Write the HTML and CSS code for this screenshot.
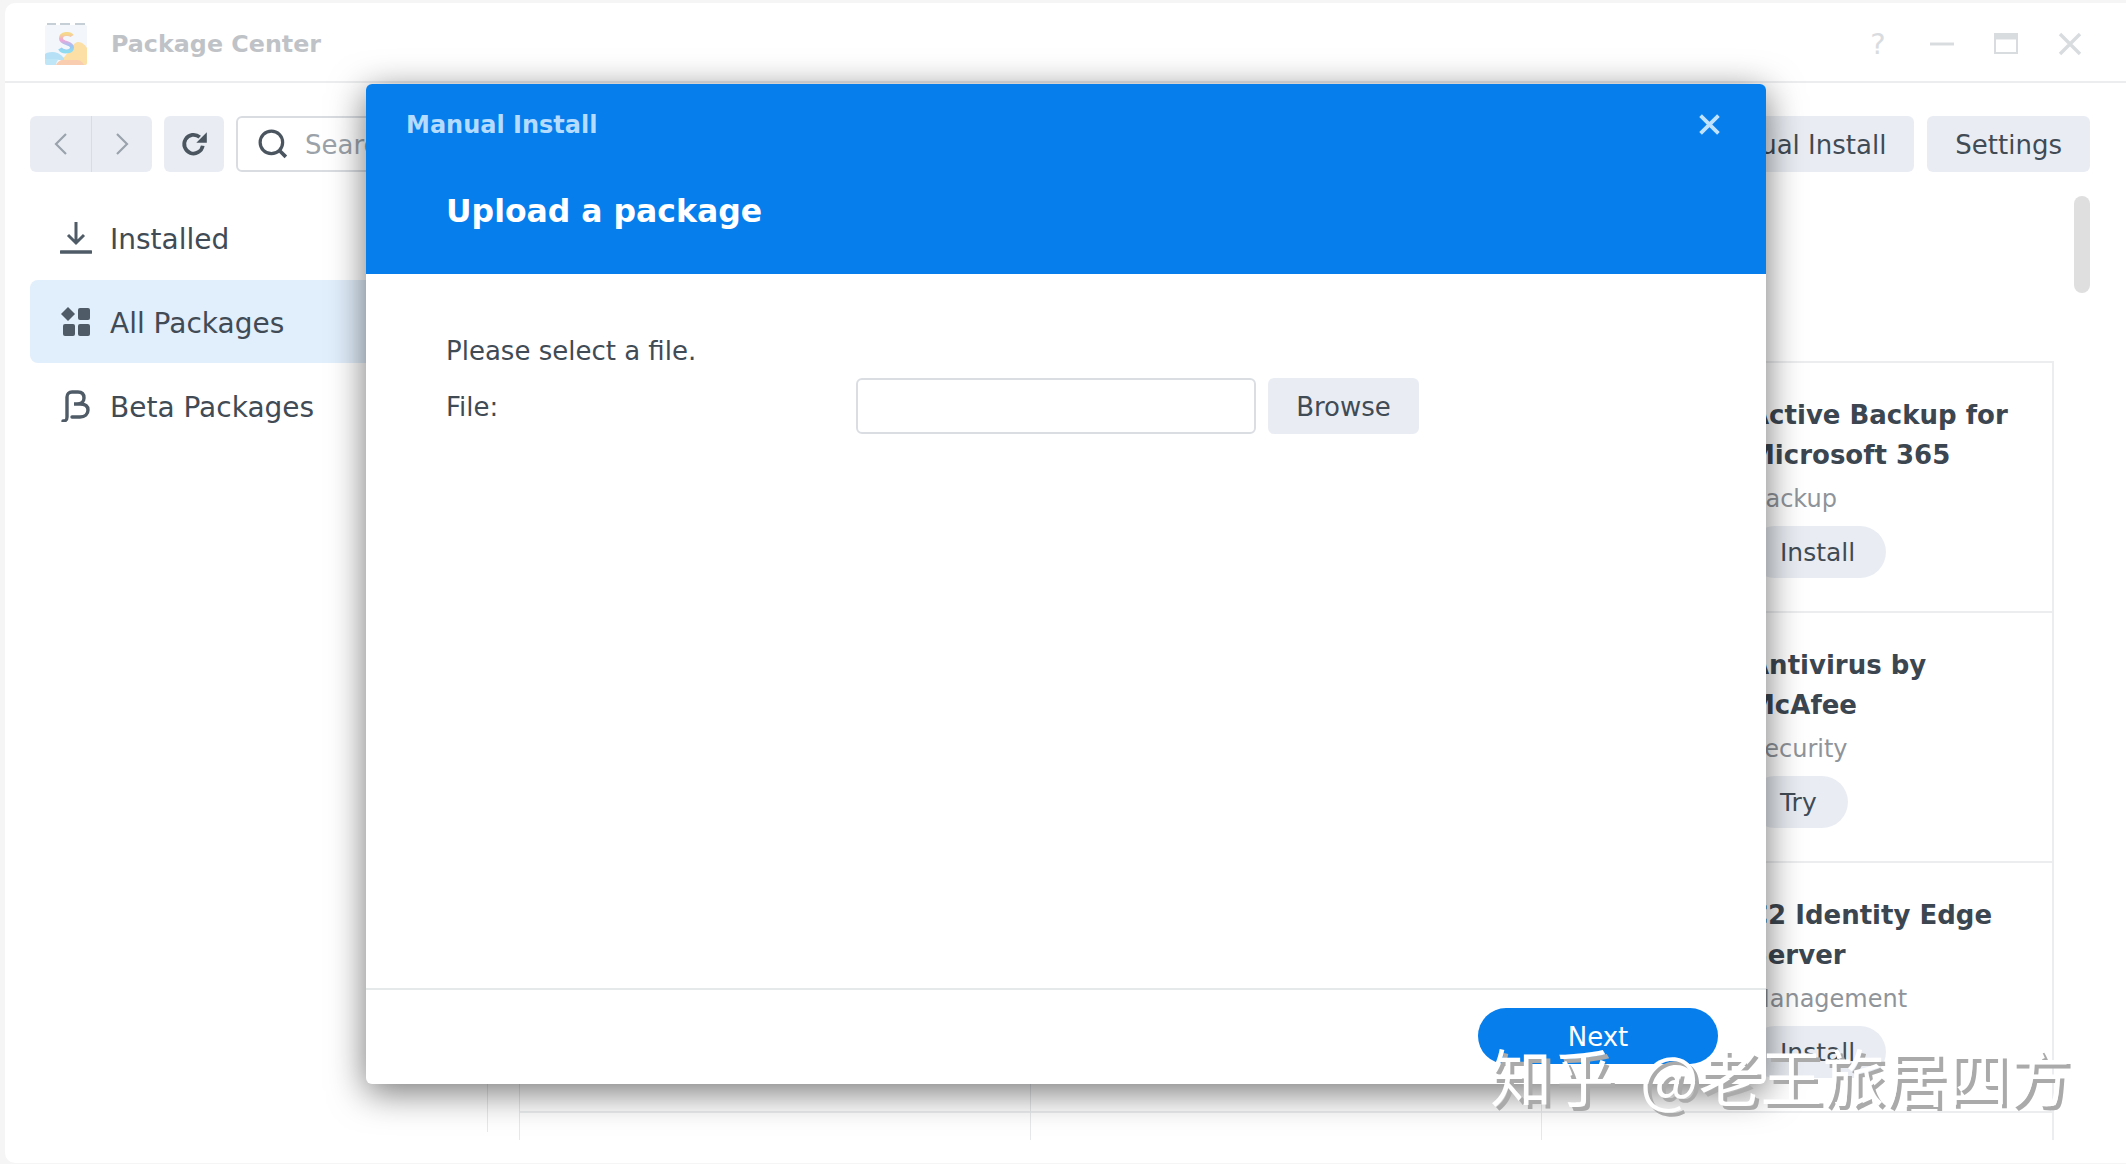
FILE: index.html
```html
<!DOCTYPE html>
<html lang="en">
<head>
  <meta charset="UTF-8" />
  <title>Package Center</title>
  <link rel="stylesheet" href="styles.css">
</head>
<body>
  <div class="window">
    <header class="titlebar">
      <svg class="app-logo" viewBox="0 0 42 42">
        <defs>
          <linearGradient id="sGrad" x1="0" y1="0" x2="0" y2="1">
            <stop offset="0" stop-color="#f6d98a"/>
            <stop offset="0.35" stop-color="#f0a6d8"/>
            <stop offset="0.7" stop-color="#9cc4f5"/>
            <stop offset="1" stop-color="#8fdcf0"/>
          </linearGradient>
        </defs>
        <rect x="0" y="2" width="42" height="40" rx="2" fill="#f3f6fa"/>
        <path d="M2 1h9M15 1h10M30 1h10" stroke="#c6ced6" stroke-width="2"/>
        <path d="M16 36c6-1 10-16 17-17 4 0 7 3 9 6v15a2 2 0 0 1-2 2H16z" fill="#fbdfa4"/>
        <path d="M0 31c5-3 13-3 19 4v2H0z" fill="#b5e0f6"/>
        <path d="M0 36h14c-2 2-3 4-3 6H2a2 2 0 0 1-2-2z" fill="#bfe6f7"/>
        <path d="M11 42c1-3 4-5 7-5h14c3 0 6 2 7 5z" fill="#f9cdb0"/>
        <path d="M27 13c-2-3-11-3-11 2.500s11 3.500 11 9c0 5-10 5-12 1" fill="none" stroke="url(#sGrad)" stroke-width="4"/>
      </svg>
      <span class="app-name">Package Center</span>
      <div class="win-controls">
        <span class="win-help">?</span>
        <svg viewBox="0 0 24 24"><path d="M0 12h24" stroke="#d9dcdf" stroke-width="3"/></svg>
        <svg viewBox="0 0 24 24"><rect x="1" y="2" width="22" height="19" fill="none" stroke="#d9dcdf" stroke-width="2"/><path d="M1 5h22" stroke="#d9dcdf" stroke-width="5"/></svg>
        <svg viewBox="0 0 24 24"><path d="M2 2l20 20M22 2L2 22" stroke="#d9dcdf" stroke-width="3.400"/></svg>
      </div>
    </header>

    <div class="toolbar">
      <div class="nav-group">
        <button class="tool-btn nav-btn"><svg viewBox="0 0 16 24"><path d="M13 2L3 12l10 10" fill="none" stroke="#9aa3ad" stroke-width="2.200"/></svg></button>
        <button class="tool-btn nav-btn"><svg viewBox="0 0 16 24"><path d="M3 2l10 10L3 22" fill="none" stroke="#9aa3ad" stroke-width="2.200"/></svg></button>
      </div>
      <button class="tool-btn refresh-btn">
        <svg viewBox="0 0 24 24"><path d="M19.500 13.500a8 8 0 1 1-2.600-7.400" fill="none" stroke="#4a5560" stroke-width="3.200"/><path d="M23 2v9h-9z" fill="#4a5560"/></svg>
      </button>
      <div class="search-box">
        <svg viewBox="0 0 28 28"><circle cx="12.500" cy="12.500" r="10.500" fill="none" stroke="#4a5560" stroke-width="3"/><path d="M20 20l6 6" stroke="#4a5560" stroke-width="3.400"/></svg>
        <span>Search</span>
      </div>
      <div class="toolbar-right">
        <button class="tool-btn text-btn">Manual Install</button>
        <button class="tool-btn text-btn">Settings</button>
      </div>
    </div>

    <div class="main">
      <nav class="sidebar">
        <a class="side-item">
          <svg viewBox="0 0 32 32"><path d="M16 0v21M8 13l8 8 8-8" fill="none" stroke="#4f5b67" stroke-width="3"/><path d="M1 30h30" stroke="#4f5b67" stroke-width="3.400" stroke-linecap="round"/></svg>
          <span>Installed</span>
        </a>
        <a class="side-item active">
          <svg viewBox="0 0 32 32"><path d="M8 1l7 7-7 7-7-7z" fill="#4f5b67"/><rect x="18" y="2" width="12" height="12" rx="2" fill="#4f5b67"/><rect x="3" y="18" width="12" height="12" rx="2" fill="#4f5b67"/><rect x="18" y="18" width="12" height="12" rx="2" fill="#4f5b67"/></svg>
          <span>All Packages</span>
        </a>
        <a class="side-item">
          <svg viewBox="0 0 32 32"><path d="M3 31c3 0 4-1 4-4V7c0-3 2-5 5-5h6c4 0 6 2 6 6s-3 6-7 6h-3h6c5 0 8 2 8 6s-3 7-8 7h-8" fill="none" stroke="#4f5b67" stroke-width="3.400" stroke-linecap="round"/></svg>
          <span>Beta Packages</span>
        </a>
      </nav>

      <div class="content">
        <div class="package-grid">
          <div class="grid-col">
            <div class="package"></div>
            <div class="package"></div>
            <div class="package"></div>
            <div class="package"></div>
          </div>
          <div class="grid-col">
            <div class="package"></div>
            <div class="package"></div>
            <div class="package"></div>
            <div class="package"></div>
          </div>
          <div class="grid-col last-col">
            <div class="package">
              <h3>Active Backup for Microsoft 365</h3>
              <p>Backup</p>
              <button class="pill">Install</button>
            </div>
            <div class="package">
              <h3>Antivirus by McAfee</h3>
              <p>Security</p>
              <button class="pill">Try</button>
            </div>
            <div class="package">
              <h3>C2 Identity Edge Server</h3>
              <p>Management</p>
              <button class="pill">Install</button>
            </div>
            <div class="package"></div>
          </div>
        </div>
        <div class="scrollbar"></div>
      </div>
    </div>
  </div>

  <section class="modal">
    <div class="modal-head">
      <div class="modal-top">
        <span class="modal-app">Manual Install</span>
        <svg class="modal-close" viewBox="0 0 20 20"><path d="M1.500 1.500l17 17M18.500 1.500l-17 17" stroke="#bfe2ff" stroke-width="3.600"/></svg>
      </div>
      <h1>Upload a package</h1>
    </div>
    <div class="modal-body">
      <p class="hint">Please select a file.</p>
      <div class="file-row">
        <label>File:</label>
        <div class="file-input"></div>
        <button class="tool-btn browse-btn">Browse</button>
      </div>
    </div>
    <div class="modal-foot">
      <button class="next-btn">Next</button>
    </div>
  </section>

  <div class="watermark">知乎 @老王旅居四方</div>
</body>
</html>
```

FILE: styles.css
```css
* {
  box-sizing: border-box;
}
body {
  margin: 0;
  padding: 3px 0 0 5px;
  width: 2126px;
  height: 1164px;
  overflow: hidden;
  background-color: #f5f5f5;
  font-family: "DejaVu Sans", Verdana, sans-serif;
  font-size: 26px;
  color: #414b55;
  position: relative;
}
button {
  font-family: inherit;
  border: none;
}

.window {
  width: 2121px;
  height: 1160px;
  background-color: #fff;
  border-radius: 10px 0 0 10px;
  display: flex;
  flex-direction: column;
}
.titlebar {
  height: 80px;
  flex: none;
  display: flex;
  align-items: center;
  padding: 4px 44px 0 40px;
  border-bottom: 2px solid #ebedef;
}
.app-logo {
  width: 42px;
  height: 42px;
}
.app-name {
  margin-left: 24px;
  font-size: 23.800px;
  font-weight: bold;
  color: #bfc3c7;
}
.win-controls {
  margin-left: auto;
  display: flex;
  align-items: center;
  gap: 40px;
}
.win-controls svg {
  width: 24px;
  height: 24px;
}
.win-help {
  width: 24px;
  text-align: center;
  font-size: 29px;
  color: #d9dcdf;
}

.toolbar {
  flex: none;
  height: 111px;
  margin-top: 2px;
  padding: 31px 36px 0 25px;
  display: flex;
  align-items: flex-start;
  gap: 12px;
}
.tool-btn {
  height: 56px;
  background-color: #e9edf3;
  border-radius: 6px;
  color: #414b55;
  font-size: 26px;
}
.nav-group {
  display: flex;
}
.nav-btn {
  width: 61px;
  padding: 0;
  display: flex;
  align-items: center;
  justify-content: center;
  border-radius: 6px 0 0 6px;
}
.nav-btn + .nav-btn {
  border-left: 1px solid #d8dde4;
  border-radius: 0 6px 6px 0;
}
.nav-btn svg {
  width: 16px;
  height: 24px;
}
.refresh-btn {
  width: 60px;
  padding: 0;
  display: flex;
  align-items: center;
  justify-content: center;
}
.refresh-btn svg {
  width: 28px;
  height: 28px;
}
.search-box {
  width: 300px;
  height: 56px;
  border: 2px solid #d9dde2;
  border-radius: 6px;
  display: flex;
  align-items: center;
  gap: 17px;
  padding-left: 20px;
  padding-top: 2px;
  color: #9ba2a9;
}
.search-box svg {
  width: 30px;
  height: 30px;
  margin-top: -2px;
}
.toolbar-right {
  margin-left: auto;
  display: flex;
  gap: 13px;
}
.text-btn {
  padding: 2px 28px 0;
}

.main {
  flex: 1;
  display: flex;
  min-height: 0;
}
.sidebar {
  width: 483px;
  height: 936px;
  flex: none;
  padding: 0 16px 0 25px;
  border-right: 1px solid #e6e8ea;
  display: flex;
  flex-direction: column;
}
.side-item {
  height: 83px;
  margin-bottom: 1px;
  display: flex;
  align-items: center;
  gap: 18px;
  padding-left: 30px;
  border-radius: 8px;
  font-size: 28px;
  color: #414b55;
}
.side-item svg {
  width: 32px;
  height: 32px;
}
.side-item span {
  padding-top: 3px;
}
.side-item.active {
  background-color: #e1eefb;
}

.content {
  flex: 1;
  position: relative;
  min-width: 0;
}
.package-grid {
  margin-left: 31px;
  padding-top: 165px;
  display: grid;
  grid-template-columns: 511px 511px 513px;
}
.grid-col {
  height: 779px;
  overflow: hidden;
  border-left: 1px solid #e6e8ea;
}
.last-col {
  border-right: 2px solid #ebedef;
}
.package {
  height: 250px;
  padding: 32px 0 0 207px;
  border-top: 2px solid #ebedef;
}
.package h3 {
  margin: 0;
  width: 280px;
  font-size: 26px;
  line-height: 40px;
  color: #3c4650;
}
.package p {
  margin: 4px 0 0;
  font-size: 24px;
  line-height: 40px;
  color: #8f949a;
}
.pill {
  display: block;
  margin-top: 7px;
  height: 52px;
  padding: 0 31px;
  border-radius: 26px;
  background-color: #e9edf3;
  font-size: 25px;
  color: #414b55;
}
.scrollbar {
  position: absolute;
  right: 36px;
  top: 0;
  width: 16px;
  height: 97px;
  border-radius: 8px;
  background-color: #dfdfdf;
}

.modal {
  position: absolute;
  left: 366px;
  top: 84px;
  width: 1400px;
  height: 1000px;
  background-color: #fff;
  border-radius: 6px;
  box-shadow: 0 8px 36px rgba(0, 0, 0, 0.55);
  display: flex;
  flex-direction: column;
  overflow: hidden;
}
.modal-head {
  height: 190px;
  flex: none;
  background-color: #067eec;
  padding: 0 46px 0 40px;
}
.modal-top {
  height: 80px;
  display: flex;
  align-items: center;
  justify-content: space-between;
}
.modal-app {
  padding-top: 1px;
  font-size: 24px;
  font-weight: bold;
  color: #b5dcff;
}
.modal-close {
  width: 21px;
  height: 21px;
}
.modal-head h1 {
  margin: 0;
  padding: 29px 0 0 40px;
  font-size: 31.500px;
  color: #fff;
}
.modal-body {
  flex: 1;
  padding: 57px 80px 0;
}
.hint {
  margin: 0;
  line-height: 40px;
}
.file-row {
  margin-top: 7px;
  display: flex;
  align-items: center;
}
.file-row label {
  width: 410px;
  padding-top: 2px;
}
.file-input {
  width: 400px;
  height: 56px;
  border: 2px solid #dadee3;
  border-radius: 6px;
}
.browse-btn {
  margin-left: 12px;
  width: 151px;
  padding-top: 2px;
}
.modal-foot {
  height: 96px;
  flex: none;
  border-top: 2px solid #e6e9ea;
  padding: 18px 48px 0 0;
  display: flex;
  justify-content: flex-end;
  align-items: flex-start;
}
.next-btn {
  width: 240px;
  height: 56px;
  padding-top: 2px;
  border-radius: 28px;
  background-color: #067eec;
  color: #fff;
  font-size: 26px;
}

.watermark {
  position: absolute;
  left: 1490px;
  top: 1035px;
  font-family: "Noto Sans CJK SC", sans-serif;
  font-size: 62px;
  line-height: 80px;
  word-spacing: 12px;
  color: #fff;
  text-shadow: 4px 4px 0 #aaa;
  white-space: nowrap;
}
```
